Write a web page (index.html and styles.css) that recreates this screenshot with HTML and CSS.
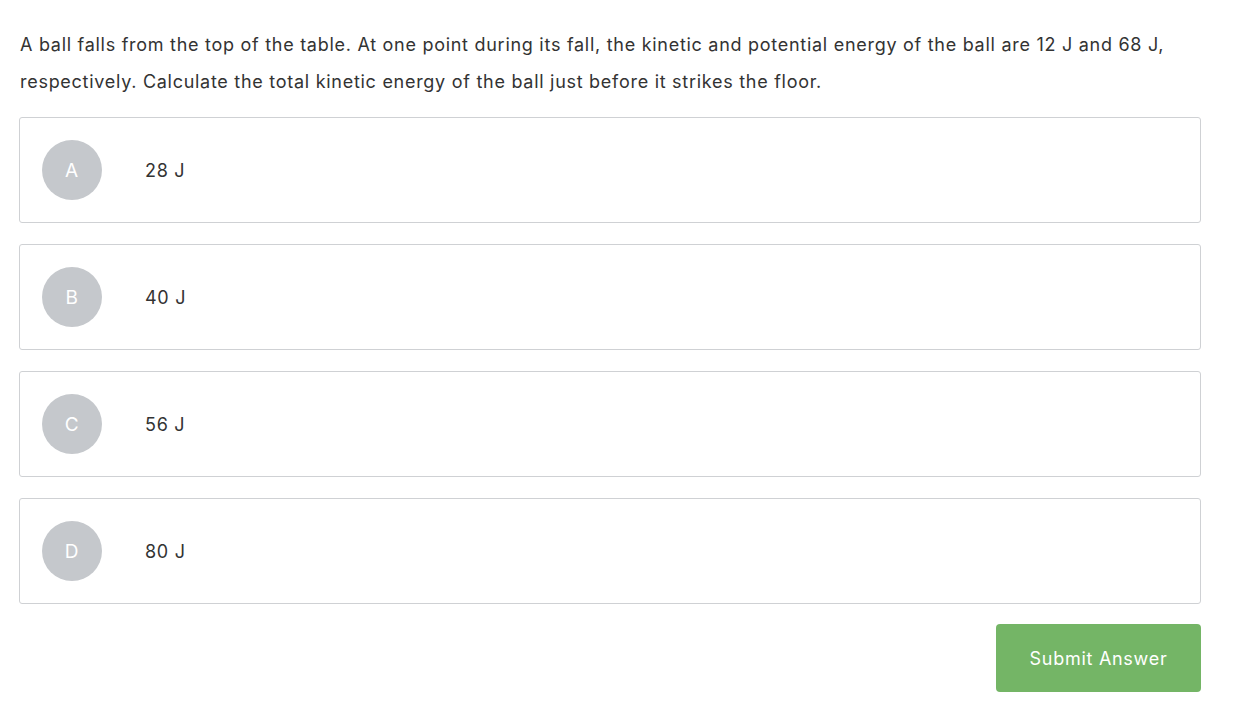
FILE: index.html
```html
<!DOCTYPE html>
<html lang="en">
<head>
    <meta charset="UTF-8">
    <meta name="viewport" content="width=device-width, initial-scale=1.0">
    <title>Question</title>
    <link rel="stylesheet" href="styles.css">
</head>
<body>
    <div class="quiz">
        <p class="question">A ball falls from the top of the table. At one point during its fall, the kinetic and potential energy of the ball are 12 J and 68 J, respectively. Calculate the total kinetic energy of the ball just before it strikes the floor.</p>

        <div class="choices">
            <div class="choice">
                <span class="letter">A</span>
                <span class="answer">28 J</span>
            </div>
            <div class="choice">
                <span class="letter">B</span>
                <span class="answer">40 J</span>
            </div>
            <div class="choice">
                <span class="letter">C</span>
                <span class="answer">56 J</span>
            </div>
            <div class="choice">
                <span class="letter">D</span>
                <span class="answer">80 J</span>
            </div>
        </div>

        <div class="actions">
            <button class="submit-button">Submit Answer</button>
        </div>
    </div>
</body>
</html>
```

FILE: styles.css
```css
body {
    font-family: Inter, "Open Sans", sans-serif;
    letter-spacing: 0.72px;
    margin: 0;
    padding: 0 35px 0 19px;
    background: #fff;
    color: #333;
}
.quiz {
    width: 1182px;
}
.question {
    font-size: 18px;
    line-height: 37px;
    margin: 26px 0 17px 1px;
}
.choices {
    display: flex;
    flex-direction: column;
    gap: 21px;
}
.choice {
    display: flex;
    align-items: center;
    border: 1px solid #cfd1d4;
    border-radius: 3px;
    padding: 22px;
    height: 60px;
}
.letter {
    width: 60px;
    height: 60px;
    border-radius: 50%;
    background: #c5c8cc;
    color: #fff;
    font-size: 19px;
    display: flex;
    align-items: center;
    justify-content: center;
}
.answer {
    font-size: 18px;
    margin-left: 43px;
}
.actions {
    display: flex;
    justify-content: flex-end;
    margin-top: 20px;
}
.submit-button {
    background: #74b566;
    color: #fff;
    border: none;
    border-radius: 4px;
    width: 205px;
    height: 68px;
    font-family: inherit;
    letter-spacing: inherit;
    font-size: 18px;
    cursor: pointer;
}
```
